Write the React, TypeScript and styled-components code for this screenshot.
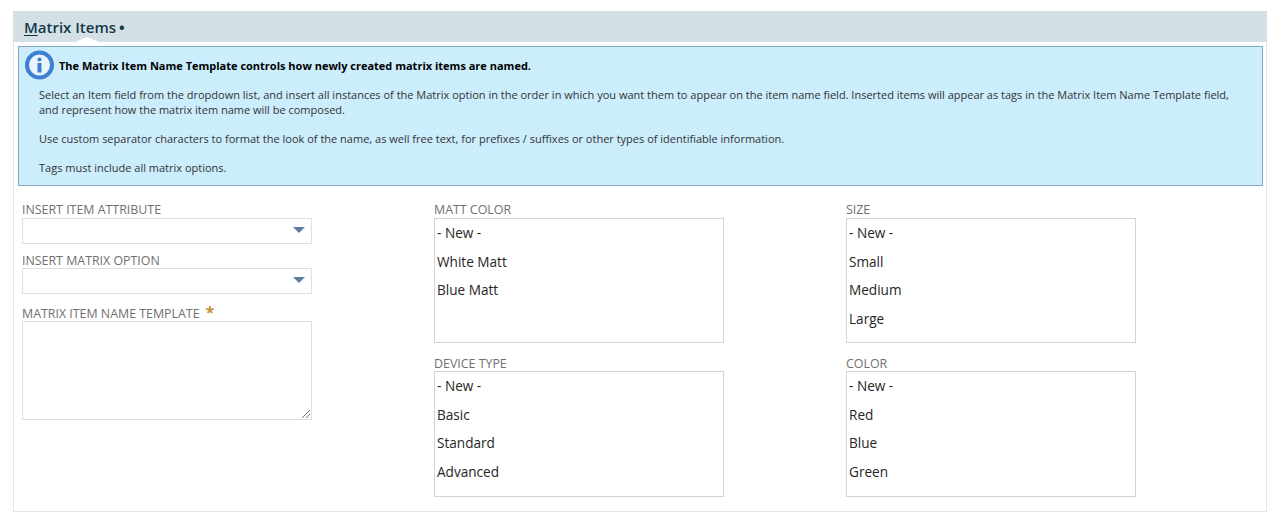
import styled, { createGlobalStyle } from "styled-components";

const GlobalStyle = createGlobalStyle`
  html, body {
    margin: 0;
    background: #ffffff;
    font-family: "Open Sans", "Liberation Sans", sans-serif;
  }
`

const Page = styled.div`
  padding: 11px 13px 14px 13px;
  width: 1280px;
  height: 527px;
  box-sizing: border-box;
`
const Panel = styled.section`
  height: 501px;
  box-sizing: border-box;
  border: 1px solid #e3e6e8;
  border-top: 0;
`
const Header = styled.div`
  position: relative;
  display: flex;
  align-items: center;
  height: 31px;
  background: #d5e0e6;
  padding-left: 11px;
  font-size: 15px;
  font-weight: 600;
  color: #0f3a4c;
  margin: 0 -1px;
  u {
    text-decoration-thickness: 1px;
    text-underline-offset: 2px;
  }
  &::after {
    content: "";
    position: absolute;
    left: 62px;
    bottom: 0;
    border-left: 12px solid transparent;
    border-right: 12px solid transparent;
    border-bottom: 5px solid #ffffff;
  }
`
const Dot = styled.span`
  margin-left: 3px;
  font-size: 15px;
  font-weight: 700;
`
const Alert = styled.div`
  height: 140px;
  box-sizing: border-box;
  margin: 4px 3px 0 4px;
  background: #cbedfc;
  border: 1px solid #85a9bf;
  padding: 3px 5px;
  color: #333333;
  font-size: 11px;
  line-height: 15px;
`
const AlertHead = styled.div`
  display: flex;
  align-items: center;
  gap: 5px;
  font-weight: 700;
  color: #000000;
  height: 30px;
`
const AlertBody = styled.div`
  margin-top: 7px;
  padding: 0 26px 0 15px;
  p {
    margin: 0 0 14px 0;
  }
`
const Form = styled.div`
  display: grid;
  grid-template-columns: repeat(3, 412px);
  padding: 16px 0 0 8px;
`
const Column = styled.div`
  display: flex;
  flex-direction: column;
  width: 290px;
`
const ListGrid = styled.div`
  display: flex;
  flex-direction: column;
  gap: 13px;
`
const Label = styled.label`
  display: block;
  font-size: 12.4px;
  line-height: 15px;
  color: #707070;
  text-transform: uppercase;
  white-space: nowrap;
`
const Required = styled.span`
  color: #c8913f;
  font-size: 16px;
  font-weight: 700;
  line-height: 10px;
  margin-left: 6px;
`
const Select = styled.div<{ $gap?: number; $tight?: boolean }>`
  position: relative;
  height: 26px;
  box-sizing: border-box;
  border: 1px solid #e0e0e0;
  margin-top: ${(p) => (p.$tight ? 0 : 1)}px;
  margin-bottom: ${(p) => p.$gap ?? 0}px;
  &::after {
    content: "";
    position: absolute;
    right: 6px;
    top: 8px;
    border-left: 6px solid transparent;
    border-right: 6px solid transparent;
    border-top: 6px solid #5f7da3;
  }
`
const Template = styled.div`
  position: relative;
  height: 99px;
  box-sizing: border-box;
  border: 1px solid #e0e0e0;
`
const Grip = styled.svg`
  position: absolute;
  right: 0;
  bottom: 0;
`
const ListBox = styled.div<{ $tight?: boolean }>`
  height: ${(p) => (p.$tight ? 126 : 125)}px;
  box-sizing: border-box;
  border: 1px solid #d4d4d4;
  padding: 0 2px;
  margin-top: ${(p) => (p.$tight ? 0 : 1)}px;
`
const Option = styled.div`
  font-size: 13.6px;
  line-height: 28.6px;
  color: #262626;
`

const lists = [
  [
    { title: "Matt Color", items: ["- New -", "White Matt", "Blue Matt"] },
    { title: "Device Type", items: ["- New -", "Basic", "Standard", "Advanced"] },
  ],
  [
    { title: "Size", items: ["- New -", "Small", "Medium", "Large"] },
    { title: "Color", items: ["- New -", "Red", "Blue", "Green"] },
  ],
];

function InfoIcon() {
  return (
    <svg width="30" height="30" viewBox="0 0 30 30">
      <circle cx="15.5" cy="15" r="12.5" fill="#e8f3fb" stroke="#3f7fd1" strokeWidth="4" />
      <circle cx="15.5" cy="9.5" r="2" fill="#3f7fd1" />
      <rect x="13.5" y="13" width="4" height="9.5" rx="0.5" fill="#3f7fd1" />
    </svg>
  );
}

export default function App() {
  return (
    <Page>
      <GlobalStyle />
      <Panel>
        <Header>
          <span><u>M</u>atrix Items</span>
          <Dot>•</Dot>
        </Header>
        <Alert>
          <AlertHead>
            <InfoIcon />
            The Matrix Item Name Template controls how newly created matrix items are named.
          </AlertHead>
          <AlertBody>
            <p>
              Select an Item field from the dropdown list, and insert all instances of the Matrix option in the order in which you want them to appear on the item name field. Inserted items will appear as tags in the Matrix Item Name Template field, and represent how the matrix item name will be composed.
            </p>
            <p>Use custom separator characters to format the look of the name, as well free text, for prefixes / suffixes or other types of identifiable information.</p>
            <p>Tags must include all matrix options.</p>
          </AlertBody>
        </Alert>
        <Form>
          <Column>
            <Label>Insert Item Attribute</Label>
            <Select $gap={9} />
            <Label>Insert Matrix Option</Label>
            <Select $gap={12} $tight />
            <Label>Matrix Item Name Template<Required>*</Required></Label>
            <Template>
              <Grip width="10" height="10" viewBox="0 0 10 10">
                <path d="M1 9 L9 1 M5 9 L9 5" stroke="#777777" strokeWidth="1" />
              </Grip>
            </Template>
          </Column>
          {lists.map((col) => (
            <Column key={col[0].title}>
              <ListGrid>
                {col.map((list, index) => (
                  <div key={list.title}>
                    <Label>{list.title}</Label>
                    <ListBox $tight={index === 1}>
                      {list.items.map((item) => (
                        <Option key={item}>{item}</Option>
                      ))}
                    </ListBox>
                  </div>
                ))}
              </ListGrid>
            </Column>
          ))}
        </Form>
      </Panel>
    </Page>
  );
}
